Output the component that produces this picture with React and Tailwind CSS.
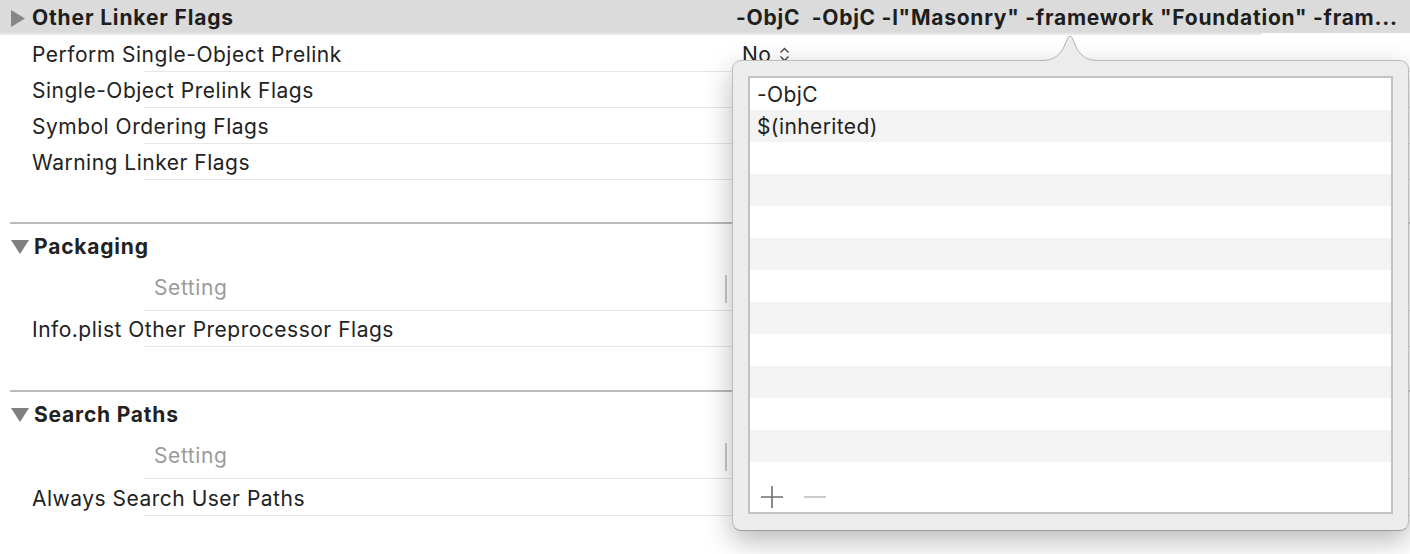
import React from "react";

const font = "font-['Inter',sans-serif]";

function TriRight() {
  return (
    <svg width="14" height="17" viewBox="0 0 14 17" className="shrink-0">
      <path d="M0 0 L14 8.5 L0 17 Z" fill="#868686" />
    </svg>
  );
}

function TriDown() {
  return (
    <svg width="18" height="14" viewBox="0 0 18 14" className="shrink-0">
      <path d="M0 0 L18 0 L9 14 Z" fill="#808080" />
    </svg>
  );
}

function Line() {
  return <div className="h-px ml-[144px] bg-[#e6e6e6]" />;
}

function Row({ children, h = "h-[35px]" }) {
  return (
    <div className={`${h} flex items-center pt-[3px] pl-[32px] text-[21px] tracking-[0.5px] text-[#222]`}>
      {children}
    </div>
  );
}

function SectionHeader({ title }) {
  return (
    <>
      <div className="h-[2px] ml-[10px] bg-[#bcbcbc]" />
      <div className="h-[44px] flex items-center pt-[1px] pl-[11px] gap-[5px]">
        <TriDown />
        <span className="text-[21px] font-bold tracking-[0.8px] text-[#222]">{title}</span>
      </div>
      <div className="h-[42px] flex items-center">
        <div className="w-[725px] pl-[154px] pb-[2px] text-[21px] tracking-[0.6px] text-[#9b9b9b]">Setting</div>
        <div className="w-[2px] h-[28px] bg-[#c8c8c8]" />
      </div>
      <Line />
    </>
  );
}

function Popover() {
  const rows = Array.from({ length: 12 });
  return (
    <div className="absolute left-[732px] top-[60px] w-[677px] h-[471px] rounded-[9px] border border-[#bdbdbd] border-b-[#9d9d9d] bg-[#ececec] shadow-[0_10px_28px_rgba(0,0,0,0.28)] px-[15px] pt-[15px] pb-[16px] flex flex-col">
      <svg
        width="56"
        height="27"
        viewBox="0 0 56 27"
        className="absolute left-[309px] top-[-26px]"
      >
        <path
          d="M0 25.5 C 10 25.5, 16 22, 21 14 L 26 2.5 Q 28 -0.5 30 2.5 L 35 14 C 40 22, 46 25.5, 56 25.5 L 56 27 L 0 27 Z"
          fill="#ececec"
        />
        <path
          d="M0 25.5 C 10 25.5, 16 22, 21 14 L 26 2.5 Q 28 -0.5 30 2.5 L 35 14 C 40 22, 46 25.5, 56 25.5"
          fill="none"
          stroke="#b3b3b3"
          strokeWidth="1"
        />
      </svg>
      <div className="flex-1 flex flex-col border-2 border-[#c2c2c2] bg-white">
        {rows.map((_, i) => (
          <div
            key={i}
            className={`h-[32px] shrink-0 flex items-center pt-[2px] pl-[7px] text-[21px] tracking-[0.4px] text-[#222] ${
              i % 2 === 1 ? "bg-[#f3f3f3]" : "bg-white"
            }`}
          >
            {i === 0 ? "-ObjC" : i === 1 ? "$(inherited)" : ""}
          </div>
        ))}
        <div className="flex-1 flex items-end pb-[4px] pl-[11px] gap-[21px]">
          <svg width="22" height="22" viewBox="0 0 22 22">
            <path d="M11 0 V22 M0 11 H22" stroke="#6f6f6f" strokeWidth="1.6" />
          </svg>
          <svg width="22" height="22" viewBox="0 0 22 22">
            <path d="M0 11 H22" stroke="#c0c0c0" strokeWidth="1.6" />
          </svg>
        </div>
      </div>
    </div>
  );
}

export default function App() {
  return (
    <div className={`${font} relative w-[1410px] h-[554px] bg-white overflow-hidden`}>
      {/* header row */}
      <div className="h-[33px] bg-[#dbdbdb] flex items-center pt-[3px]">
        <div className="w-[736px] flex items-center pl-[11px] gap-[7px]">
          <TriRight />
          <span className="text-[21px] font-bold tracking-[0.85px] text-[#1e1e1e]">Other Linker Flags</span>
        </div>
        <span className="text-[21px] font-bold tracking-[0.75px] text-[#1e1e1e] whitespace-pre">
          {'-ObjC  -ObjC -l"Masonry" -framework "Foundation" -fram...'}
        </span>
      </div>
      <div className="h-[2px] w-[1262px] bg-[#e9e9e9]" />

      <Row h="h-[36px]">
        <span className="w-[710px]">Perform Single-Object Prelink</span>
        <span className="flex items-center gap-[8px]">
          No
          <svg width="11" height="15" viewBox="0 0 11 15">
            <path d="M1.5 5.5 L5.5 1.5 L9.5 5.5 M1.5 9.5 L5.5 13.5 L9.5 9.5" fill="none" stroke="#444" strokeWidth="1.4" />
          </svg>
        </span>
      </Row>
      <Line />
      <Row>Single-Object Prelink Flags</Row>
      <Line />
      <Row>Symbol Ordering Flags</Row>
      <Line />
      <Row>Warning Linker Flags</Row>
      <Line />

      <div className="h-[42px]" />
      <SectionHeader title="Packaging" />
      <Row>Info.plist Other Preprocessor Flags</Row>
      <Line />

      <div className="h-[43px]" />
      <SectionHeader title="Search Paths" />
      <Row h="h-[36px]">Always Search User Paths</Row>
      <Line />

      <Popover />
    </div>
  );
}
